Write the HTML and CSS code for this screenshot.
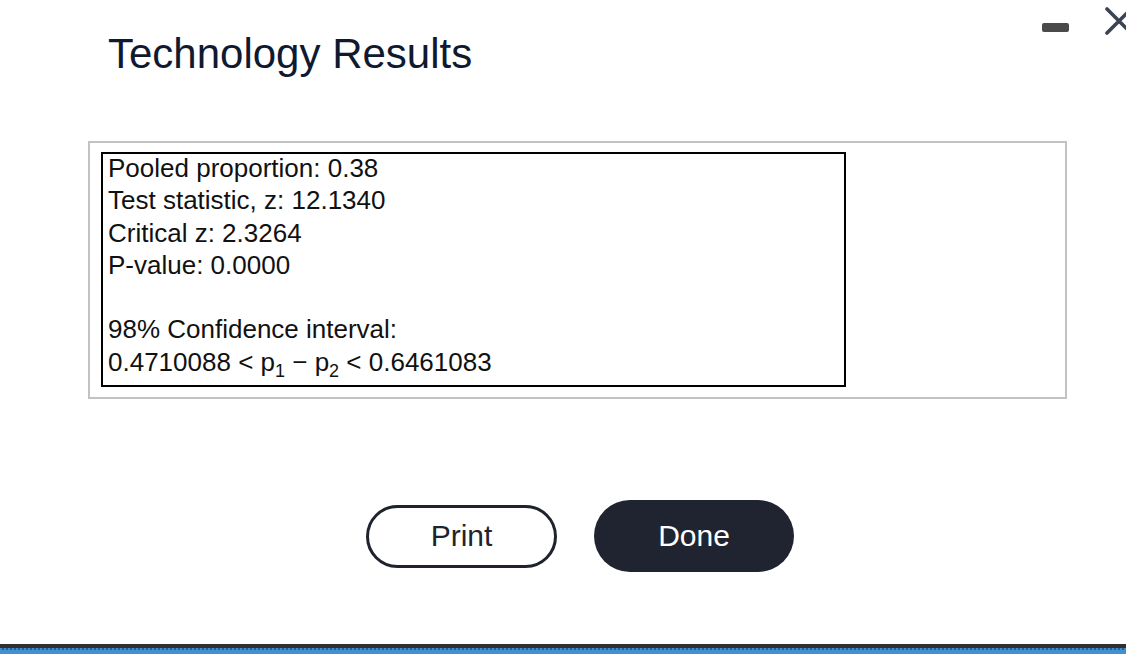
FILE: index.html
```html
<!DOCTYPE html>
<html>
<head>
<meta charset="utf-8">
<link rel="stylesheet" href="styles.css">
</head>
<body>
<div class="dialog">
  <div class="header">
    <h1 class="title">Technology Results</h1>
    <div class="controls">
      <span class="minimize"></span>
      <svg class="close" width="28" height="28" viewBox="0 0 28 28"><path d="M2 2 L26 26 M26 2 L2 26" stroke="#3b4452" stroke-width="3.6" stroke-linecap="round" fill="none"/></svg>
    </div>
  </div>
  <div class="results-frame">
    <div class="results">
      <div class="results-text">
        <div class="line">Pooled proportion: 0.38</div>
        <div class="line">Test statistic, z: 12.1340</div>
        <div class="line">Critical z: 2.3264</div>
        <div class="line">P-value: 0.0000</div>
        <div class="line">&nbsp;</div>
        <div class="line">98% Confidence interval:</div>
        <div class="line">0.4710088 &lt; p<sub>1</sub> − p<sub>2</sub> &lt; 0.6461083</div>
      </div>
    </div>
  </div>
  <div class="actions">
    <button class="btn btn-outline">Print</button>
    <button class="btn btn-solid">Done</button>
  </div>
  <div class="bottom-bar">
    <div class="bar-dark"></div>
    <div class="bar-check"></div>
    <div class="bar-blue"></div>
  </div>
</div>
</body>
</html>
```

FILE: styles.css
```css
html, body {
  margin: 0;
  padding: 0;
  background: #ffffff;
}
body {
  width: 1126px;
  height: 654px;
  overflow: hidden;
  font-family: "Liberation Sans", Arial, Helvetica, sans-serif;
}
.dialog {
  display: flex;
  flex-direction: column;
  height: 654px;
}
.header {
  display: flex;
  align-items: flex-start;
}
.title {
  margin: 30px 0 0 108px;
  font-size: 42px;
  line-height: 48px;
  font-weight: normal;
  color: #0f1a30;
}
.controls {
  margin-left: auto;
  margin-right: -7px;
  display: flex;
  align-items: flex-start;
  gap: 36px;
}
.minimize {
  display: block;
  width: 27px;
  height: 9px;
  margin-top: 23px;
  background: #4a4a4a;
  border-radius: 2px;
}
.close {
  display: block;
  margin-top: 7px;
}
.results-frame {
  margin: 63px 0 0 88px;
  width: 964px;
  height: 245px;
  border: 2px solid #c2c2c2;
  padding: 9px 0 0 11px;
  box-sizing: content-box;
}
.results {
  width: 736px;
  height: 231px;
  border: 2px solid #000000;
  padding: 0 0 0 5px;
  box-sizing: content-box;
  font-size: 26px;
  line-height: 32.3px;
  color: #111111;
}
.results-text {
  margin-top: -2px;
}
.results sub {
  font-size: 18px;
  line-height: 0;
  vertical-align: -6px;
}
.actions {
  display: flex;
  justify-content: center;
  align-items: center;
  gap: 37px;
  margin-top: 101px;
  padding-left: 34px;
}
.btn {
  font-family: "Liberation Sans", Arial, Helvetica, sans-serif;
  font-size: 30px;
  border-radius: 40px;
  box-sizing: border-box;
  padding: 0;
}
.btn-outline {
  width: 191px;
  height: 63px;
  background: #ffffff;
  border: 3px solid #1f232d;
  color: #1f232d;
}
.btn-solid {
  width: 200px;
  height: 72px;
  background: #1f2430;
  border: none;
  color: #ffffff;
}
.bottom-bar {
  margin-top: auto;
}
.bar-dark {
  height: 4px;
  background: #2f2f2f;
}
.bar-check {
  height: 2px;
  background: repeating-linear-gradient(90deg, #3d8fd0 0 2px, #2f5f88 2px 4px);
}
.bar-blue {
  height: 4px;
  background: #3f91d1;
}
```
